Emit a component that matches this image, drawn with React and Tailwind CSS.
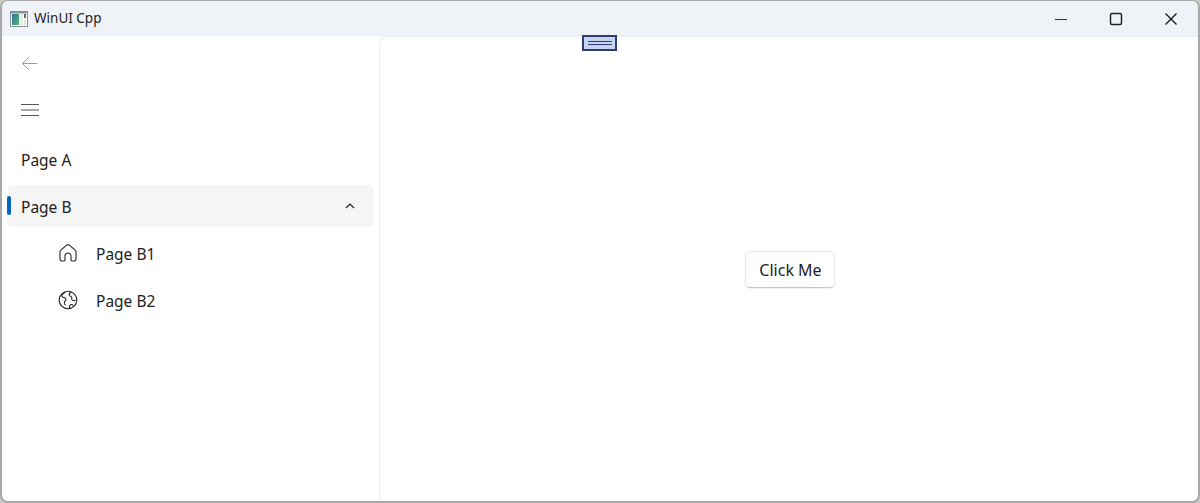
import React from "react";

// Window caption buttons
const CaptionButtons = () => (
  <div className="flex items-center h-full">
    <button className="w-[55px] h-full flex items-center justify-center">
      <svg width="14" height="14" viewBox="0 0 14 14"><path d="M1 7.500h12" stroke="#333" strokeWidth="1.1" fill="none" /></svg>
    </button>
    <button className="w-[55px] h-full flex items-center justify-center">
      <svg width="14" height="14" viewBox="0 0 14 14"><rect x="1.500" y="1.500" width="11" height="11" rx="1.500" stroke="#222" strokeWidth="1.5" fill="none" /></svg>
    </button>
    <button className="w-[55px] h-full flex items-center justify-center">
      <svg width="14" height="14" viewBox="0 0 14 14"><path d="M1.500 1.500l11 11M12.500 1.500l-11 11" stroke="#111" strokeWidth="1.3" fill="none" /></svg>
    </button>
  </div>
);

const AppIcon = () => (
  <svg width="18" height="16" viewBox="0 0 18 16" className="shrink-0">
    <defs>
      <linearGradient id="appPane" x1="0" y1="0" x2="1" y2="1">
        <stop offset="0" stopColor="#2f6f9a" />
        <stop offset="1" stopColor="#58b878" />
      </linearGradient>
    </defs>
    <rect x="0.500" y="0.500" width="17" height="15" fill="#fff" stroke="#8a8f96" />
    <rect x="1" y="1" width="16" height="1.500" fill="#8a9099" />
    <rect x="2" y="3" width="7" height="11" fill="url(#appPane)" />
    <rect x="9" y="3" width="4" height="11" fill="#e6f0e2" />
    <rect x="14" y="3" width="2" height="4" fill="#5a6573" />
    <rect x="14" y="9" width="2" height="5" fill="#dde2e4" />
  </svg>
);

const HomeIcon = () => (
  <svg width="20" height="20" viewBox="0 0 20 20" fill="none" stroke="#222" strokeWidth="1.100" strokeLinejoin="round">
    <path d="M8.600 2.200a2.100 2.100 0 0 1 2.800 0l6 5.200c.4.300.6.800.6 1.300v7.600a1.700 1.700 0 0 1-1.700 1.700h-2.200a1.100 1.100 0 0 1-1.100-1.100v-3.900a3 3 0 0 0-6 0v3.900a1.100 1.100 0 0 1-1.100 1.100H3.700A1.700 1.700 0 0 1 2 16.300V8.700c0-.5.200-1 .6-1.300z" />
  </svg>
);

const GlobeIcon = () => (
  <svg width="20" height="20" viewBox="0 0 20 20" fill="none" stroke="#222" strokeWidth="1.100" strokeLinejoin="round">
    <circle cx="10" cy="10" r="8.800" />
    <path d="M7 1.800c-.3 1.500-1.600 1.800-2.600 2.600-1 .9-.8 2.300.4 2.700 1.400.4 2.900.6 3.200 2 .3 1.500-1.300 1.700-1.600 3-.3 1.200.2 2.400 1.200 3" />
    <path d="M13.500 2c-1.300.6-2.600 1.700-2.300 3 .3 1.200 1.600 1.100 2.300 2 .7 1-.2 2 .6 3 .8 1 2 .6 3.500.2" />
    <path d="M15.500 15.500c-1-.8-2-1.400-3-.8-1.200.7-.8 2-1.200 3.800" />
  </svg>
);

const NavRow = ({ active, indent, icon, label, chevron }) => (
  <div className={`relative h-[42px] mb-[5px] flex items-center rounded-[6px] ${active ? "bg-[#f5f5f5]" : ""}`}>
    {active && <span className="absolute left-0 top-[11px] w-[4px] h-[19px] rounded-full bg-[#0067c0]"></span>}
    {icon && <span className="ml-[51px] mr-[18px] flex w-[20px] justify-center">{icon}</span>}
    <span className={`${indent ? "" : "ml-[14px]"} pt-[3px] text-[15.5px] text-[#222222]`}>{label}</span>
    {chevron && (
      <svg className="ml-auto mr-[19px]" width="10" height="10" viewBox="0 0 10 10" fill="none">
        <path d="M1 7l4-4 4 4" stroke="#222" strokeWidth="1.200" />
      </svg>
    )}
  </div>
);

const Sidebar = () => (
  <aside className="w-[377px] shrink-0 pt-[4px] pl-[5px] pr-[5px]">
    <div className="h-[46px] mb-[1px] flex items-center pl-[14px]">
      <svg width="17" height="17" viewBox="0 0 17 17" fill="none">
        <path d="M16 8.500H1.500M8 2L1.500 8.500 8 15" stroke="#9a9a9a" strokeWidth="1" />
      </svg>
    </div>
    <div className="h-[46px] mb-[5px] flex items-center pl-[14px]">
      <svg width="18" height="14" viewBox="0 0 18 14" fill="none">
        <path d="M0 1.500h18M0 7h18M0 12.500h18" stroke="#555" strokeWidth="1.200" />
      </svg>
    </div>
    <NavRow label="Page A" />
    <NavRow active chevron label="Page B" />
    <NavRow indent icon={<HomeIcon />} label="Page B1" />
    <NavRow indent icon={<GlobeIcon />} label="Page B2" />
  </aside>
);

export default function App() {
  return (
    <div className="w-[1200px] h-[503px] bg-[#c9c9c9] overflow-hidden" style={{ fontFamily: "'Noto Sans', sans-serif" }}>
      <div className="relative w-full h-full flex flex-col bg-white border-2 border-t border-[#a8a8a8] rounded-[8px] overflow-hidden">
        <header className="h-[35px] shrink-0 flex items-center justify-between bg-[#eff3f8]">
          <div className="flex items-center pl-[8px] gap-[6px]">
            <AppIcon />
            <span className="text-[13.500px] text-[#222222]">WinUI Cpp</span>
          </div>
          <CaptionButtons />
        </header>

        <div className="flex-1 flex min-h-0">
          <Sidebar />
          <main className="flex-1 flex items-center justify-center border-l border-t border-[#eeeeee] rounded-tl-[8px] pl-[1px] pt-[1px]">
            <button className="w-[90px] h-[37px] pl-[2px] bg-white rounded-[5px] border border-[#e8e8e8] border-b-[#c4c4c4] shadow-[0_1px_1px_rgba(0,0,0,0.06)] text-[16px] text-[#222222]">
              Click Me
            </button>
          </main>
        </div>

        {/* collapsed in-app toolbar handle */}
        <div className="absolute left-[580px] top-[34px] w-[35px] h-[16px] flex items-center justify-center bg-[#c8d3f0] border-2 border-[#303c74]">
          <div className="w-[24px] h-[4px] border-y border-[#303c74]"></div>
        </div>
      </div>
    </div>
  );
}
